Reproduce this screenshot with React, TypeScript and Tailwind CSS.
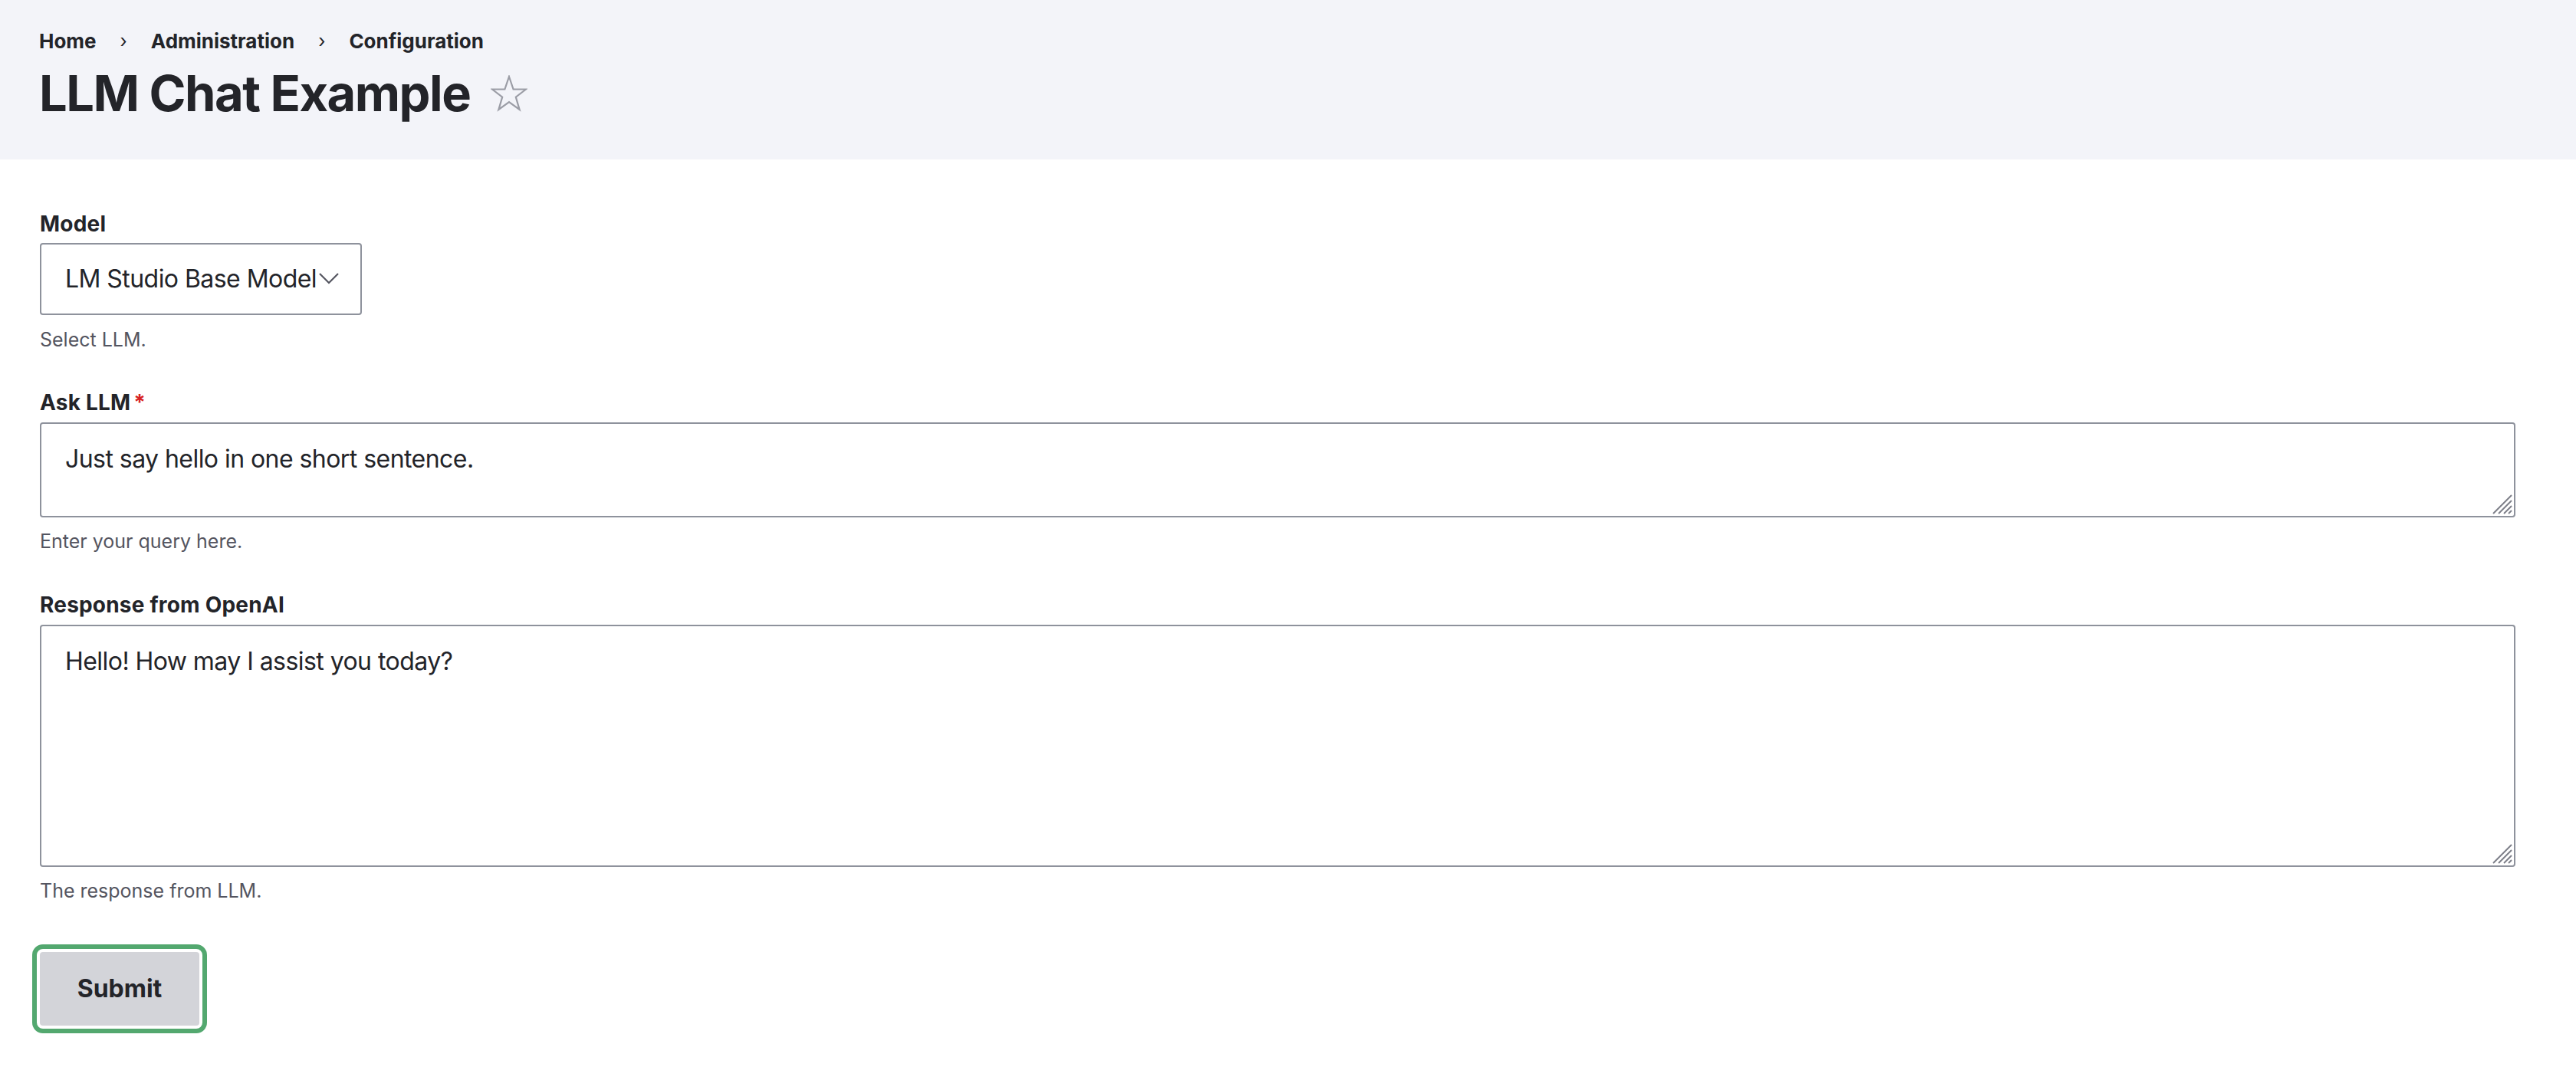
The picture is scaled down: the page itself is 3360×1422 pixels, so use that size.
import { useState } from 'react';

const crumbs = ['Home', 'Administration', 'Configuration'];

const ResizeHandle = () => (
  <svg
    className="pointer-events-none absolute right-[4px] bottom-[4px]"
    width="26"
    height="26"
    viewBox="0 0 26 26"
    fill="none"
    stroke="#7c7e88"
    strokeWidth="2"
  >
    <line x1="1" y1="25" x2="25" y2="1" />
    <line x1="8" y1="25" x2="25" y2="8" />
    <line x1="15" y1="25" x2="25" y2="15" />
    <line x1="21" y1="25" x2="25" y2="21" />
  </svg>
);

const App = () => {
  const [model, setModel] = useState('lm_studio');
  const [query, setQuery] = useState('Just say hello in one short sentence.');
  const response = 'Hello! How may I assist you today?';

  return (
    <div className="min-h-screen bg-white font-['Inter','Noto_Sans',sans-serif] text-[#232429]">
      <header className="bg-[#f3f4f9] pl-[51px] pt-[36px] pb-[46px]">
        <nav className="flex items-center gap-[31px] text-[26px] leading-[36px] font-bold">
          {crumbs.map((c, i) => (
            <div key={c} className="flex items-center gap-[31px]">
              {i > 0 && <span className="font-normal text-[24px]">›</span>}
              <a href="#">{c}</a>
            </div>
          ))}
        </nav>
        <div className="mt-[10px] flex items-center gap-[27px]">
          <h1 className="text-[65px] leading-[80px] font-bold tracking-[-1.5px]">LLM Chat Example</h1>
          <svg width="48" height="48" viewBox="0 0 48 48" fill="none" stroke="#9b9da6" strokeWidth="2.2" strokeLinejoin="miter">
            <polygon points="24,2 29.6,18.5 46,18.5 32.8,28.6 37.6,45 24,35 10.4,45 15.2,28.6 2,18.5 18.4,18.5" />
          </svg>
        </div>
      </header>

      <form className="pl-[52px] pr-[79px] pt-[66px] pb-20" onSubmit={(e) => e.preventDefault()}>
        {/* model select */}
        <div>
          <label className="block text-[28px] leading-[36px] font-bold tracking-[0.2px]">Model</label>
          <div className="relative mt-[7px] w-[420px]">
            <select
              value={model}
              onChange={(e) => setModel(e.target.value)}
              className="block h-[94px] w-full appearance-none rounded-[4px] border-2 border-[#8e929c] bg-white pl-[31px] pr-[40px] text-[32px] tracking-[-0.55px] text-[#232429] outline-none"
            >
              <option value="lm_studio">LM Studio Base Model</option>
            </select>
            <svg
              className="pointer-events-none absolute right-[30px] top-[39px]"
              width="26"
              height="15"
              viewBox="0 0 26 15"
              fill="none"
              stroke="#545560"
              strokeWidth="2.2"
            >
              <polyline points="1,1 13,13 25,1" />
            </svg>
          </div>
          <p className="mt-[14px] text-[25px] leading-[36px] text-[#545560]">Select LLM.</p>
        </div>

        {/* query */}
        <div className="mt-[46px]">
          <label className="flex text-[28px] leading-[36px] font-bold tracking-[0.2px]">
            Ask LLM<span className="ml-[4px] text-[#d72222]">*</span>
          </label>
          <div className="relative mt-[8px]">
            <textarea
              value={query}
              onChange={(e) => setQuery(e.target.value)}
              className="block h-[124px] w-full resize-none rounded-[4px] border-2 border-[#8e929c] bg-white px-[31px] pt-[22px] text-[32px] leading-[48px] tracking-[-0.55px] outline-none"
            />
            <ResizeHandle />
          </div>
          <p className="mt-[13px] text-[25px] leading-[36px] text-[#545560]">Enter your query here.</p>
        </div>

        {/* response */}
        <div className="mt-[47px]">
          <label className="block text-[28px] leading-[36px] font-bold tracking-[0.2px]">Response from OpenAI</label>
          <div className="relative mt-[8px]">
            <textarea
              readOnly
              value={response}
              className="block h-[316px] w-full resize-none rounded-[4px] border-2 border-[#8e929c] bg-white px-[31px] pt-[22px] text-[32px] leading-[48px] tracking-[-0.55px] outline-none"
            />
            <ResizeHandle />
          </div>
          <p className="mt-[13px] text-[25px] leading-[36px] text-[#545560]">The response from LLM.</p>
        </div>

        <button
          type="submit"
          className="mt-[62px] h-[96px] w-[208px] rounded-[4px] bg-[#d3d4d9] text-[32px] font-bold text-[#232429] outline-[6px] outline-offset-[4px] outline-[#53a86f] outline-solid"
        >
          Submit
        </button>
      </form>
    </div>
  );
};

export default App;
